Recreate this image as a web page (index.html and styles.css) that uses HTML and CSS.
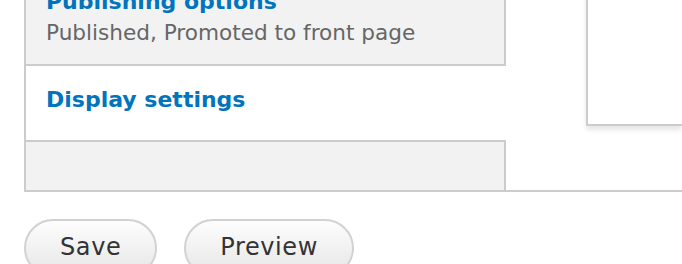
FILE: index.html
```html
<!DOCTYPE html>
<html>
<head>
<meta charset="utf-8">
<link rel="stylesheet" href="styles.css">
</head>
<body>
<div class="page">
  <div class="tabs">
    <ul class="menu">
      <li class="item">
        <a class="title" href="#">Publishing options</a>
        <span class="summary">Published, Promoted to front page</span>
      </li>
      <li class="item selected">
        <a class="title" href="#">Display settings</a>
      </li>
      <li class="item filler"></li>
    </ul>
    <div class="panes">
      <div class="pane-box"></div>
    </div>
  </div>
  <div class="actions">
    <button class="button">Save</button>
    <button class="button">Preview</button>
  </div>
</div>
</body>
</html>
```
FILE: styles.css
```css
html, body {
  margin: 0;
  padding: 0;
  background: #fff;
  overflow: hidden;
}
body {
  font-family: "DejaVu Sans", Verdana, sans-serif;
  color: #333;
}
.page {
  padding-left: 24px;
}
.tabs {
  display: flex;
  margin-top: -32px;
  border-left: 2px solid #ccc;
  border-bottom: 2px solid #ccc;
}
.menu {
  list-style: none;
  margin: 0;
  padding: 0;
  width: 480px;
  flex: none;
  display: flex;
  flex-direction: column;
}
.item {
  background: #f2f2f2;
  border-right: 2px solid #ccc;
  padding: 20px 20px 17px;
}
.item:first-child {
  border-bottom: 2px solid #ccc;
}
.item.selected {
  background: #fff;
  border-right-color: transparent;
  padding-bottom: 26px;
}
.item.filler {
  border-top: 2px solid #ccc;
  padding: 0;
  box-sizing: border-box;
  height: 50px;
}
.title {
  display: block;
  font-size: 22px;
  font-weight: bold;
  line-height: 28px;
  color: #0074bd;
  text-decoration: none;
}
.summary {
  display: block;
  margin-top: 3px;
  font-size: 21.6px;
  line-height: 28px;
  color: #666;
}
.panes {
  flex: 1;
  padding-left: 80px;
}
.pane-box {
  height: 154px;
  border: 2px solid #ccc;
  border-right: none;
  background: #fff;
  box-shadow: 0 4px 5px rgba(0, 0, 0, 0.1);
}
.actions {
  display: flex;
  gap: 27px;
  margin-top: 27px;
}
.button {
  font-family: "DejaVu Sans", Verdana, sans-serif;
  font-size: 24px;
  letter-spacing: 0.6px;
  line-height: 28px;
  color: #333;
  padding: 12px 34px 14px;
  border: 2px solid #d2d2d2;
  border-radius: 30px;
  background: linear-gradient(to bottom, #fdfdfd, #e6e6e6);
  cursor: pointer;
}
```
